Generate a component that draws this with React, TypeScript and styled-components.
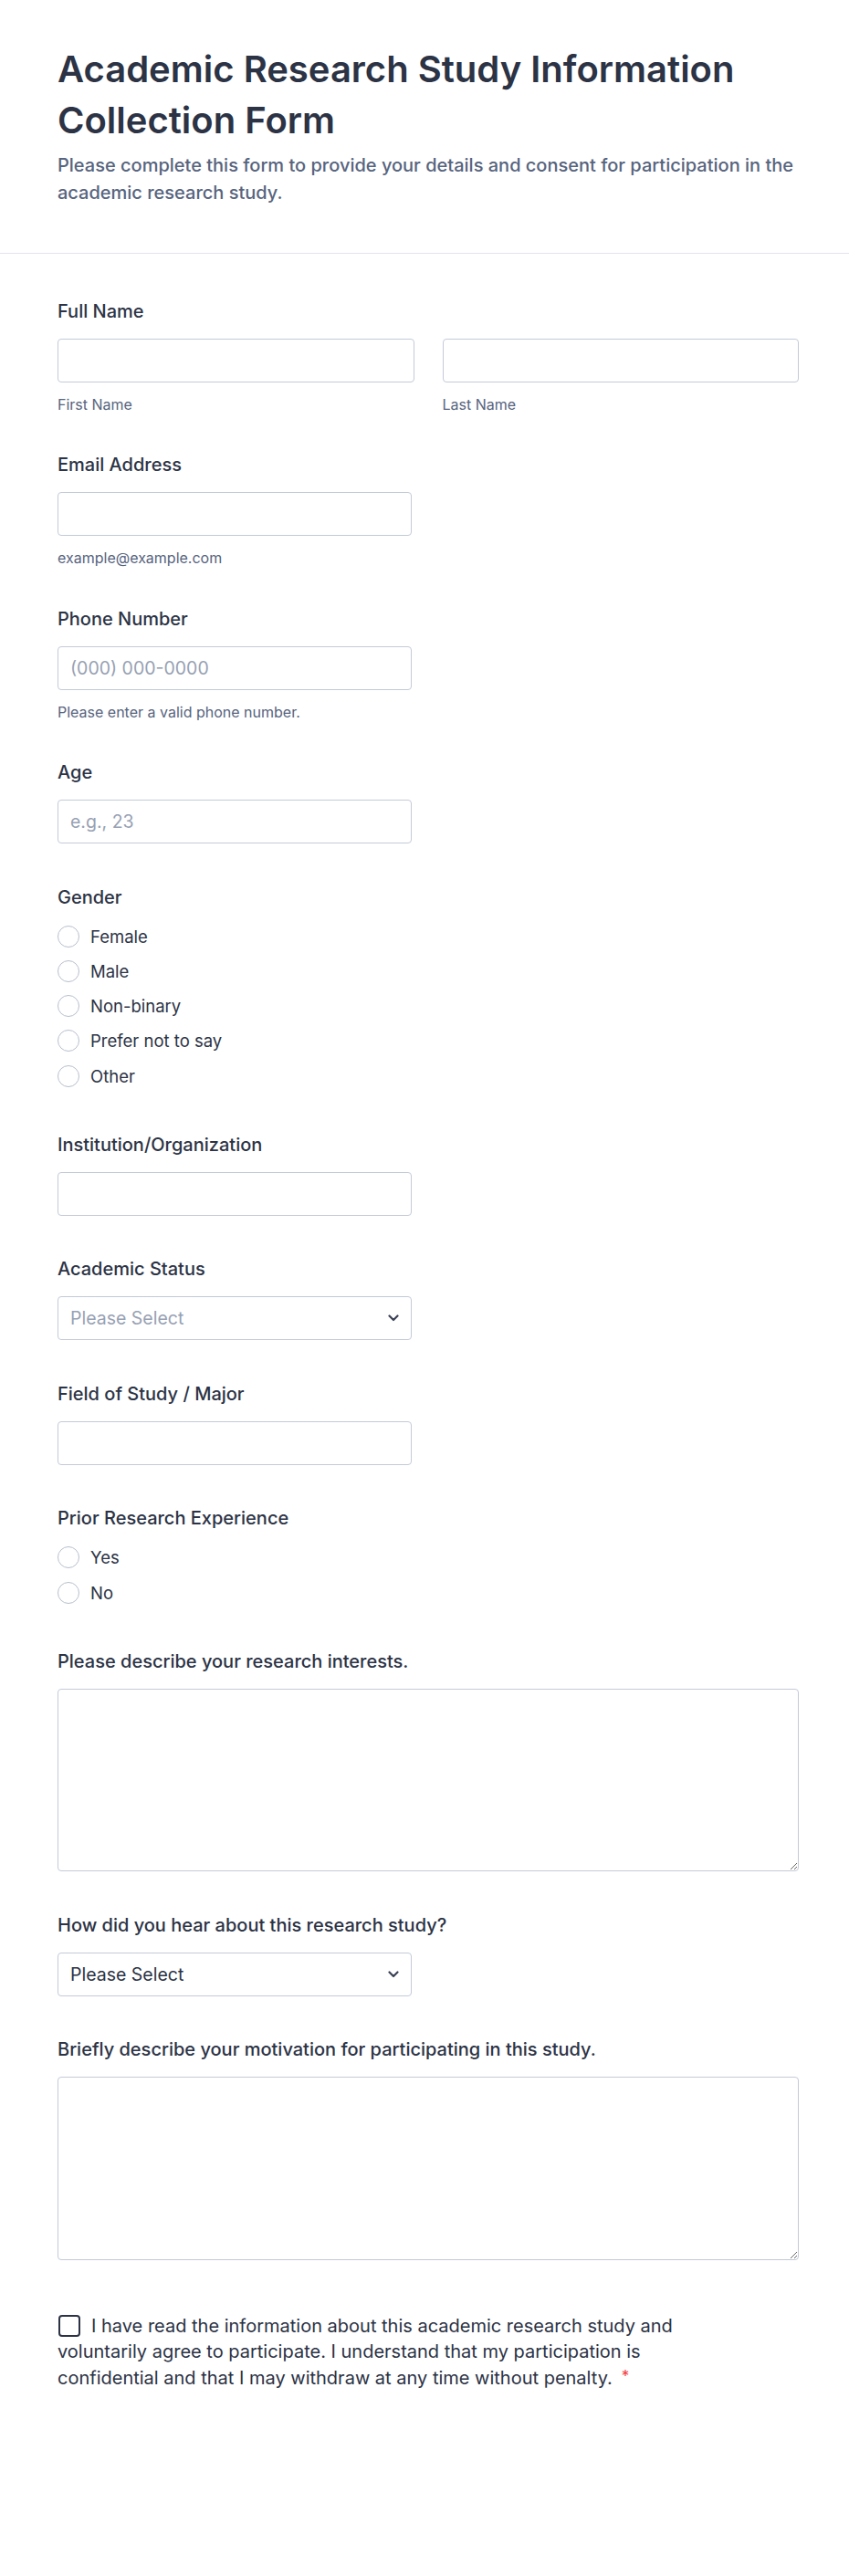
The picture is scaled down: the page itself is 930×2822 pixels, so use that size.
import React from 'react';
import styled, { createGlobalStyle } from 'styled-components';

const GlobalStyle = createGlobalStyle`
  body {
    margin: 0;
    background: #ffffff;
    font-family: Inter, "Noto Sans", "Liberation Sans", sans-serif;
    color: #2c3345;
  }
  * { box-sizing: border-box; }
`;

const Page = styled.div`
  width: 100%;
  min-height: 2822px;
  background: #fff;
`;

const Header = styled.header`
  padding: 48px 55px 51px 63px;
  border-bottom: 1px solid #e3e5ec;
`;

const Title = styled.h1`
  margin: 0;
  font-size: 40px;
  line-height: 56px;
  font-weight: 600;
  color: #2c3345;
`;

const Subtitle = styled.p`
  margin: 6px 0 0;
  font-size: 20px;
  line-height: 30px;
  font-weight: 500;
  color: #57647e;
`;

const Form = styled.form`
  padding: 47.5px 55px 120px 63px;
  display: flex;
  flex-direction: column;
`;

const Field = styled.div<{ $extra?: number }>`
  margin-bottom: ${({ $extra }) => 43.5 + ($extra || 0)}px;
`;

const Label = styled.label`
  display: block;
  font-size: 20px;
  line-height: 30px;
  font-weight: 500;
  color: #2c3345;
  margin-bottom: 15px;
`;

const NameRow = styled.div`
  display: grid;
  grid-template-columns: 1fr 1fr;
  column-gap: 31px;
`;

const Input = styled.input<{ $wide?: boolean }>`
  display: block;
  width: ${({ $wide }) => ($wide ? '100%' : '388px')};
  height: 48px;
  padding: 0 13px;
  border: 1px solid #c3cad8;
  border-radius: 4px;
  background: #fff;
  font-family: inherit;
  font-size: 19.5px;
  color: #2c3345;
  outline: none;
  &::placeholder { color: #97a1b3; }
`;

const Sublabel = styled.span`
  display: block;
  margin-top: 14px;
  font-size: 16px;
  line-height: 20px;
  color: #57647e;
`;

const RadioList = styled.div`
  display: flex;
  flex-direction: column;
  gap: 12.33px;
`;

const RadioRow = styled.label`
  display: flex;
  align-items: center;
  gap: 12px;
  height: 26px;
  font-size: 18.5px;
  color: #2c3345;
`;

const RadioCircle = styled.input.attrs({ type: 'radio' })`
  appearance: none;
  margin: 0;
  width: 24px;
  height: 24px;
  border-radius: 50%;
  border: 1px solid #b8bfcc;
  background: #fff;
`;

const SelectWrap = styled.div`
  position: relative;
  width: 388px;
`;

const Select = styled.select<{ $placeholder?: boolean }>`
  appearance: none;
  display: block;
  width: 100%;
  height: 48px;
  padding: 0 40px 0 13px;
  border: 1px solid #c3cad8;
  border-radius: 4px;
  background: #fff;
  font-family: inherit;
  font-size: 19.5px;
  color: ${({ $placeholder }) => ($placeholder ? '#97a1b3' : '#2c3345')};
  outline: none;
`;

const Chevron = styled.svg`
  position: absolute;
  right: 14px;
  top: 50%;
  width: 12px;
  height: 8px;
  margin-top: -4px;
  pointer-events: none;
`;

const TextArea = styled.textarea`
  display: block;
  width: 100%;
  height: 200.5px;
  padding: 12px 13px;
  border: 1px solid #c3cad8;
  border-radius: 4px;
  font-family: inherit;
  font-size: 19.5px;
  color: #2c3345;
  resize: vertical;
  outline: none;
`;

const Consent = styled.p`
  margin: 16px 0 0;
  max-width: 700px;
  font-size: 20px;
  line-height: 27.5px;
  color: #2c3345;
`;

const CheckBox = styled.input.attrs({ type: 'checkbox' })`
  appearance: none;
  display: inline-block;
  vertical-align: -5px;
  width: 24px;
  height: 24px;
  margin: 0 12px 0 1px;
  border: 2px solid #2c3345;
  border-radius: 4px;
  background: #fff;
`;

const Required = styled.span`
  margin-left: 10px;
  color: #f23a3c;
  font-size: 17px;
  vertical-align: 3px;
`;

const genders = ['Female', 'Male', 'Non-binary', 'Prefer not to say', 'Other'];

const DropDown = ({ placeholder }: { placeholder?: boolean }) => (
  <SelectWrap>
    <Select $placeholder={placeholder} defaultValue="">
      <option value="">Please Select</option>
    </Select>
    <Chevron viewBox="0 0 12 8">
      <path d="M1.5 1.5 6 6l4.5-4.5" fill="none" stroke="#3b4256" strokeWidth="2.2" strokeLinecap="round" strokeLinejoin="round" />
    </Chevron>
  </SelectWrap>
);

const App = () => (
  <Page>
    <GlobalStyle />
    <Header>
      <Title>Academic Research Study Information Collection Form</Title>
      <Subtitle>
        Please complete this form to provide your details and consent for participation in the academic research study.
      </Subtitle>
    </Header>
    <Form>
      <Field $extra={-2}>
        <Label>Full Name</Label>
        <NameRow>
          <div>
            <Input $wide />
            <Sublabel>First Name</Sublabel>
          </div>
          <div>
            <Input $wide />
            <Sublabel>Last Name</Sublabel>
          </div>
        </NameRow>
      </Field>

      <Field $extra={-2}>
        <Label>Email Address</Label>
        <Input type="email" />
        <Sublabel>example@example.com</Sublabel>
      </Field>

      <Field $extra={-2}>
        <Label>Phone Number</Label>
        <Input placeholder="(000) 000-0000" />
        <Sublabel>Please enter a valid phone number.</Sublabel>
      </Field>

      <Field>
        <Label>Age</Label>
        <Input placeholder="e.g., 23" />
      </Field>

      <Field $extra={3.5}>
        <Label>Gender</Label>
        <RadioList>
          {genders.map((g) => (
            <RadioRow key={g}>
              <RadioCircle name="gender" />
              {g}
            </RadioRow>
          ))}
        </RadioList>
      </Field>

      <Field>
        <Label>Institution/Organization</Label>
        <Input />
      </Field>

      <Field>
        <Label>Academic Status</Label>
        <DropDown placeholder />
      </Field>

      <Field>
        <Label>Field of Study / Major</Label>
        <Input />
      </Field>

      <Field $extra={3.5}>
        <Label>Prior Research Experience</Label>
        <RadioList>
          {['Yes', 'No'].map((o) => (
            <RadioRow key={o}>
              <RadioCircle name="prior" />
              {o}
            </RadioRow>
          ))}
        </RadioList>
      </Field>

      <Field>
        <Label>Please describe your research interests.</Label>
        <TextArea />
      </Field>

      <Field>
        <Label>How did you hear about this research study?</Label>
        <DropDown />
      </Field>

      <Field>
        <Label>Briefly describe your motivation for participating in this study.</Label>
        <TextArea />
      </Field>

      <Consent>
        <CheckBox />
        I have read the information about this academic research study and voluntarily agree to participate. I understand that my participation is confidential and that I may withdraw at any time without penalty.
        <Required>*</Required>
      </Consent>
    </Form>
  </Page>
);

export default App;
